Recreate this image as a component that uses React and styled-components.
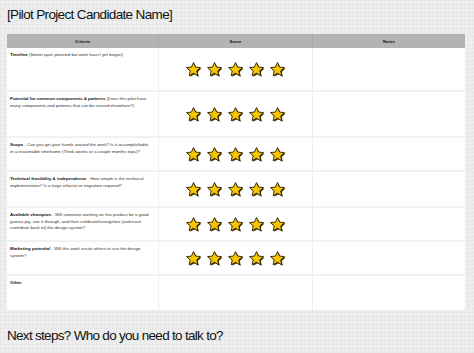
import React from 'react';
import styled, { createGlobalStyle } from 'styled-components';

const GlobalStyle = createGlobalStyle`
  html, body {
    margin: 0;
    padding: 0;
  }
  body {
    width: 474px;
    height: 353px;
    overflow: hidden;
    background-color: #efefef;
    background-image:
      linear-gradient(rgba(0, 0, 0, 0.025) 1px, transparent 1px),
      linear-gradient(90deg, rgba(0, 0, 0, 0.025) 1px, transparent 1px);
    background-size: 4px 4px;
    font-family: 'Liberation Sans', Arial, sans-serif;
  }
`;

const rows = [
  {
    title: 'Timeline',
    text: ' (Sweet spot: planned but work hasn\u2019t yet begun)',
    height: 44,
    stars: 5,
  },
  {
    title: 'Potential for common components & patterns',
    text: ' (Does this pilot have many components and patterns that can be reused elsewhere?)',
    height: 46,
    stars: 5,
  },
  {
    title: 'Scope',
    text: ' - Can you get your hands around the work? Is it accomplishable in a reasonable timeframe (Think weeks or a couple months tops)?',
    height: 34,
    stars: 5,
  },
  {
    title: 'Technical feasibility & independence',
    text: ' - How simple is the technical implementation? Is a large refactor or migration required?',
    height: 36,
    stars: 5,
  },
  {
    title: 'Available champion',
    text: ' - Will someone working on this product be a good guinea pig, see it through, and then celebrate/evangelize (and even contribute back to) the design system?',
    height: 34,
    stars: 5,
  },
  {
    title: 'Marketing potential',
    text: ' - Will this work excite others to use the design system?',
    height: 34,
    stars: 5,
  },
  {
    title: 'Other',
    text: '',
    height: 34,
    stars: 0,
  },
];

const Star = () => (
  <svg width="17" height="17" viewBox="0 0 24 24">
    <path
      transform="translate(1.4 1.4)"
      d="M12 2.2l2.9 6.4 6.9.7-5.2 4.7 1.5 6.9L12 17.3l-6.1 3.6 1.5-6.9L2.2 9.3l6.9-.7z"
      fill="#3a2a00"
    />
    <path
      d="M12 2.2l2.9 6.4 6.9.7-5.2 4.7 1.5 6.9L12 17.3l-6.1 3.6 1.5-6.9L2.2 9.3l6.9-.7z"
      fill="#f7c600"
      stroke="#2b2100"
      strokeWidth="1.3"
      strokeLinejoin="round"
    />
  </svg>
);

export default function App() {
  return (
    <Page>
      <GlobalStyle />
      <Title>[Pilot Project Candidate Name]</Title>
      <Table>
        <HeadCell>Criteria</HeadCell>
        <HeadCell>Score</HeadCell>
        <HeadCell $last>Notes</HeadCell>
        {rows.map((r, i) => (
          <React.Fragment key={i}>
            <Cell $h={r.height}>
              <Criteria>
                <b>{r.title}</b>
                {r.text}
              </Criteria>
            </Cell>
            <Cell $h={r.height}>
              <Stars>
                {Array.from({ length: r.stars }).map((_, j) => (
                  <Star key={j} />
                ))}
              </Stars>
            </Cell>
            <Cell $h={r.height} $last />
          </React.Fragment>
        ))}
      </Table>
      <Footer>Next steps? Who do you need to talk to?</Footer>
    </Page>
  );
}

const Page = styled.div`
  padding: 7px 9px 0 7px;
`;

const Title = styled.h1`
  margin: 0;
  height: 27px;
  font-size: 13.5px;
  font-weight: 400;
  line-height: 16px;
  letter-spacing: -0.65px;
  color: #111;
`;

const Table = styled.div`
  display: grid;
  grid-template-columns: 152px 154px 152px;
  width: 458px;
  background: #fff;
`;

const HeadCell = styled.div`
  height: 14px;
  background: #b3b3b3;
  border-right: ${p => (p.$last ? 'none' : '1px solid #a9a9a9')};
  display: flex;
  align-items: center;
  justify-content: center;
  font-size: 4.3px;
  font-weight: 700;
  color: #111;
`;

const Cell = styled.div`
  height: ${p => p.$h}px;
  box-sizing: border-box;
  border-bottom: 2px solid #f1f1f1;
  border-right: ${p => (p.$last ? 'none' : '1px solid #eeeeee')};
  display: flex;
  align-items: center;
  justify-content: center;
  &:nth-last-child(-n + 3) {
    border-bottom: none;
  }
`;

const Criteria = styled.div`
  align-self: flex-start;
  width: 100%;
  padding: 4px 5px 0 3px;
  box-sizing: border-box;
  font-size: 4.4px;
  line-height: 6.7px;
  color: #333;
  b {
    color: #111;
    font-weight: 700;
  }
`;

const Stars = styled.div`
  display: flex;
  gap: 4px;
`;

const Footer = styled.h2`
  margin: 17px 0 0;
  font-size: 13.5px;
  font-weight: 400;
  line-height: 18px;
  letter-spacing: -0.7px;
  color: #111;
`;
